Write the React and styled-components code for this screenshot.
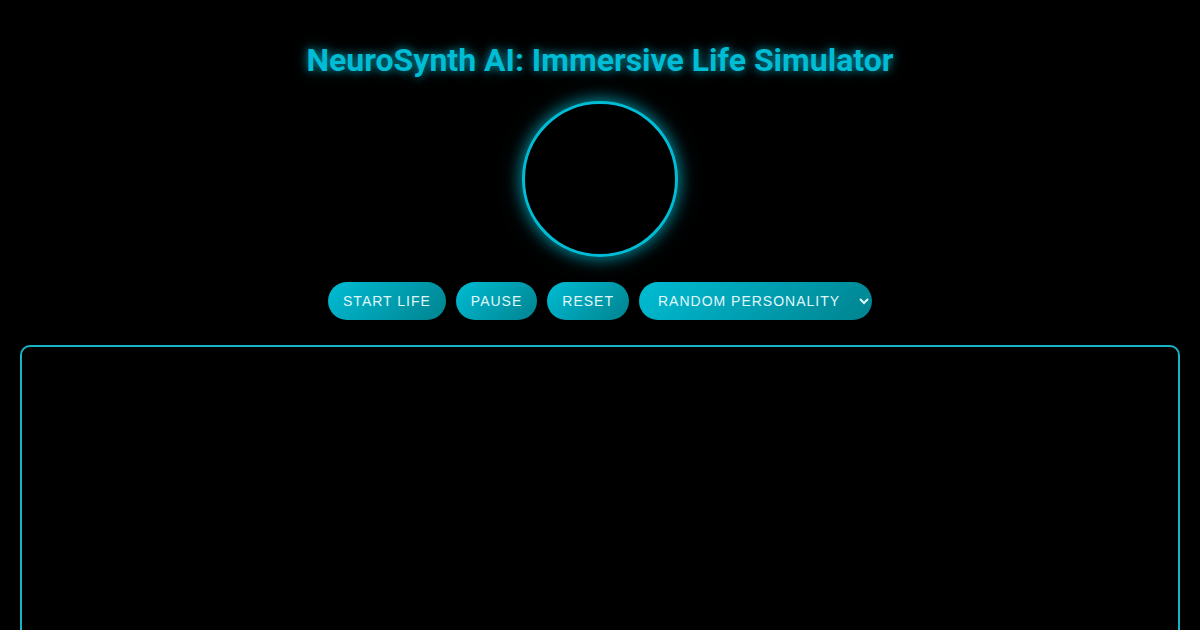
import styled, { createGlobalStyle } from 'styled-components'

const GlobalStyle = createGlobalStyle`
	html, body {
		margin: 0;
		background: #000;
	}
	body {
		font-family: 'Liberation Sans', Arial, sans-serif;
		color: #e0f7fa;
	}
`

const Page = styled.div`
	padding: 20px;
	display: flex;
	flex-direction: column;
	align-items: center;
`

const Title = styled.h1`
	font-family: Roboto, 'Liberation Sans', sans-serif;
	font-weight: 700;
	font-size: 32px;
	margin: 21px 0 22px;
	color: #00bcd4;
	text-shadow: 0 0 8px rgba(0, 188, 212, 0.7), 0 0 16px rgba(0, 188, 212, 0.35);
`

const Avatar = styled.div`
	flex-shrink: 0;
	width: 150px;
	height: 150px;
	border-radius: 50%;
	border: 3px solid #00bcd4;
	background: #000;
	box-shadow: 0 0 14px 2px rgba(0, 188, 212, 0.6), 0 0 28px rgba(0, 188, 212, 0.25);
	margin-bottom: 25px;
`

const Controls = styled.div`
	display: flex;
	gap: 10px;
	align-items: center;
	margin-bottom: 25px;
`

const Button = styled.button`
	height: 38px;
	padding: 0 15px;
	border: none;
	border-radius: 20px;
	background: linear-gradient(135deg, #00bcd4, #00838f);
	color: #e0f7fa;
	font-family: 'Liberation Sans', Arial, sans-serif;
	font-size: 14px;
	letter-spacing: 1px;
	text-transform: uppercase;
	cursor: pointer;
`

const Select = styled.select`
	height: 38px;
	width: 233px;
	padding: 0 8px 0 15px;
	border: none;
	border-radius: 20px;
	background: linear-gradient(135deg, #00bcd4, #00838f);
	color: #e0f7fa;
	font-family: 'Liberation Sans', Arial, sans-serif;
	font-size: 14px;
	letter-spacing: 1px;
	outline: none;
`

const World = styled.div`
	align-self: stretch;
	height: 400px;
	border: 2px solid #1ab3c6;
	border-radius: 10px;
	background: #000;
`

export default function App() {
	return (
		<>
			<GlobalStyle />
			<Page>
				<Title>NeuroSynth AI: Immersive Life Simulator</Title>
				<Avatar />
				<Controls>
					<Button>Start Life</Button>
					<Button>Pause</Button>
					<Button>Reset</Button>
					<Select defaultValue='random'>
						<option value='random'>RANDOM PERSONALITY</option>
						<option value='curious'>CURIOUS</option>
						<option value='cautious'>CAUTIOUS</option>
					</Select>
				</Controls>
				<World />
			</Page>
		</>
	)
}
